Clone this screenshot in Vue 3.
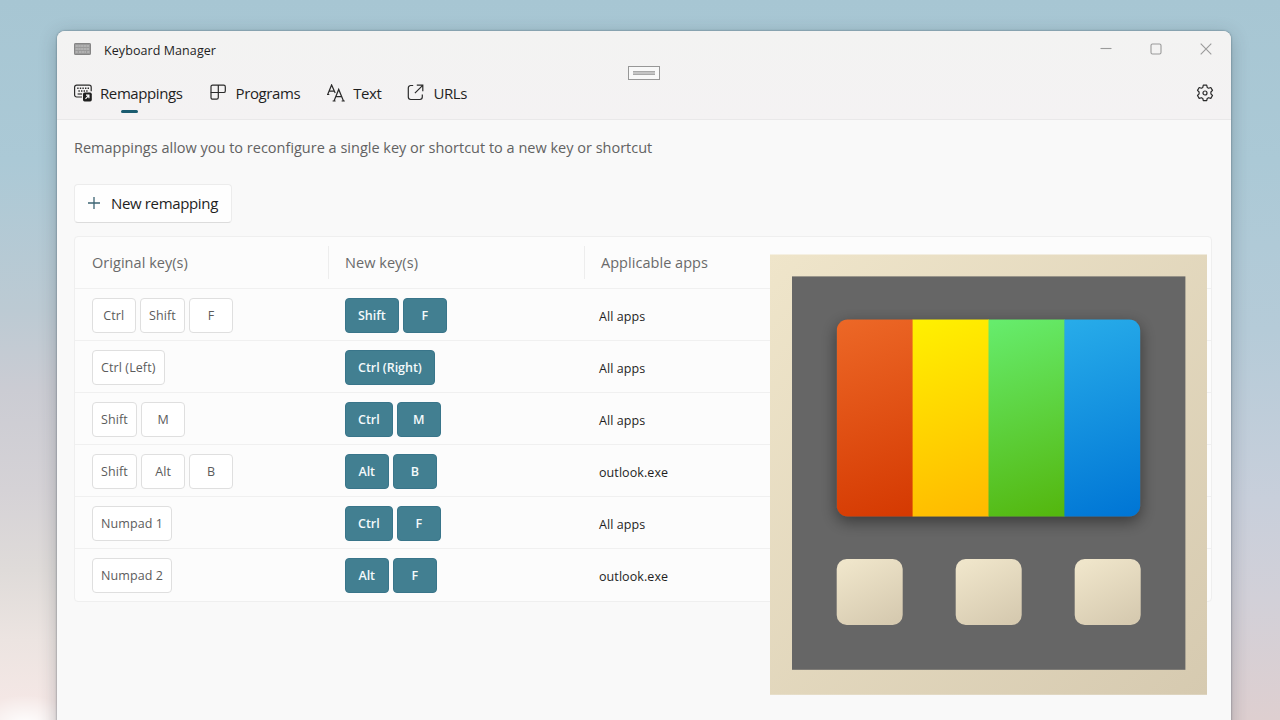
<template>
  <div class="desktop">
    <div class="window">
      <!-- Title bar and tabs -->
      <header class="window-head">
        <div class="title-bar">
          <svg class="app-icon" viewBox="0 0 17 12">
            <rect x="0.5" y="0.5" width="16" height="11" rx="0.6" fill="#9a9a9a" stroke="#858585" />
            <path d="M1.5 3h14M1.5 6h14M1.5 9h2.2M5 9h7M13.2 9h2.3" stroke="#cfcfcf" stroke-width="0.9" stroke-dasharray="2.4 0.4" />
          </svg>
          <span class="app-title">Keyboard Manager</span>
          <div class="window-controls">
            <svg viewBox="0 0 12 12"><path d="M0.5 5.5h11" /></svg>
            <svg viewBox="0 0 12 12"><rect x="1" y="1" width="10" height="10" rx="1.5" /></svg>
            <svg viewBox="0 0 12 12"><path d="M0.7 0.7l10.6 10.6M11.3 0.7L0.7 11.3" /></svg>
          </div>
        </div>
        <nav class="tab-bar">
          <button
            v-for="tab in tabs"
            :key="tab.id"
            class="tab"
            :class="[tab.id, { active: activeTab === tab.id }]"
            @click="activeTab = tab.id"
          >
            <svg v-if="tab.id === 'remappings'" class="tab-icon" viewBox="0 0 18 18">
              <path d="M8 13H2.6a2 2 0 0 1-2-2V3.2a2 2 0 0 1 2-2h12.6a2 2 0 0 1 2 2v4" />
              <path d="M3.2 4.3h12M4.4 7h9.6" stroke-width="1.4" stroke-dasharray="1.4 1.2" />
              <path d="M3.6 10h4.5" />
              <rect x="9" y="8.6" width="8.8" height="8.8" rx="1.6" fill="#1f1f1f" stroke="none" />
              <path d="M11.5 14.8l3.3-3.5M12 11.2h2.9v3" stroke="#fff" />
            </svg>
            <svg v-else-if="tab.id === 'programs'" class="tab-icon" viewBox="0 0 18 18">
              <path d="M2.7 1.1h11a1.6 1.6 0 0 1 1.6 1.6v4.2a1.6 1.6 0 0 1-1.6 1.6H1V2.7a1.6 1.6 0 0 1 1.7-1.6z" />
              <path d="M8.3 1.1v12.5a1.6 1.6 0 0 1-1.6 1.6h-4A1.6 1.6 0 0 1 1 13.600V8.500" />
            </svg>
            <svg v-else-if="tab.id === 'text'" class="tab-icon" viewBox="0 0 18 18">
              <path d="M0.7 10.4L4.6 0.9l3.6 8.2M2 7.1h5M0 10.5h2.3" />
              <path d="M7 16.9L11.7 5.4l4.8 11.5M8.7 12.7h6M5.6 17h3M14.6 17h3.2" />
            </svg>
            <svg v-else class="tab-icon" viewBox="0 0 18 18">
              <path d="M6.2 1.5H3.7a2.4 2.4 0 0 0-2.4 2.4v9.2a2.4 2.4 0 0 0 2.4 2.4h9.200a2.4 2.4 0 0 0 2.400-2.400V10.500" />
              <path d="M9.800 1.200h6v6M15.700 1.300L7.900 9.200" />
            </svg>
            <span>{{ tab.label }}</span>
          </button>
          <svg class="gear" viewBox="0 0 18 18">
            <path d="M7.3 1.2h3.4l.5 2.2 1.4.8 2.2-.7 1.7 2.9-1.6 1.6v1.9l1.6 1.6-1.7 2.9-2.2-.7-1.4.8-.5 2.2H7.3l-.5-2.2-1.4-.8-2.2.7-1.7-2.9 1.6-1.6V8L1.5 6.4l1.7-2.9 2.2.7 1.4-.8z" />
            <circle cx="9" cy="9" r="2" />
          </svg>
        </nav>
      </header>

      <!-- Page content -->
      <main class="content">
        <p class="description">Remappings allow you to reconfigure a single key or shortcut to a new key or shortcut</p>
        <button class="new-btn">
          <svg viewBox="0 0 14 14"><path d="M7 1v12M1 7h12" /></svg>
          <span>New remapping</span>
        </button>

        <div class="table">
          <div class="row table-head">
            <div class="cell">Original key(s)</div>
            <div class="cell">New key(s)</div>
            <div class="cell">Applicable apps</div>
          </div>
          <div v-for="(item, index) in remappings" :key="index" class="row">
            <div class="cell keys">
              <span v-for="key in item.original" :key="key" class="key">{{ key }}</span>
            </div>
            <div class="cell keys">
              <span v-for="key in item.remapped" :key="key" class="key accent">{{ key }}</span>
            </div>
            <div class="cell app-name">{{ item.app }}</div>
          </div>
        </div>
      </main>
    </div>

    <div class="grip"><i></i></div>

    <!-- PowerToys logo over the window -->
    <svg class="logo" viewBox="0 0 437 441">
      <defs>
        <linearGradient id="frame" x1="0" y1="0" x2="1" y2="1">
          <stop offset="0" stop-color="#efe5ca" />
          <stop offset="1" stop-color="#d6cab0" />
        </linearGradient>
        <linearGradient id="pad" x1="0.25" y1="0" x2="0.75" y2="1">
          <stop offset="0" stop-color="#efe5ca" />
          <stop offset="1" stop-color="#d6cab0" />
        </linearGradient>
        <linearGradient
          v-for="(stripe, index) in stripes"
          :id="stripe.id"
          :key="stripe.id"
          gradientUnits="userSpaceOnUse"
          :x1="72 + index * 75.9"
          y1="68"
          :x2="138 + index * 75.9"
          y2="259"
        >
          <stop offset="0" :stop-color="stripe.from" />
          <stop offset="1" :stop-color="stripe.to" />
        </linearGradient>
        <clipPath id="screen"><rect x="66.7" y="65.5" width="303.5" height="197" rx="11" /></clipPath>
        <filter id="shadow" x="-20%" y="-20%" width="140%" height="150%">
          <feDropShadow dx="0" dy="5" stdDeviation="8" flood-color="#000" flood-opacity="0.45" />
        </filter>
      </defs>
      <rect y="0.5" width="437" height="440.3" fill="url(#frame)" />
      <rect x="22" y="22.4" width="393.4" height="393.4" fill="#666" />
      <rect x="66.7" y="65.5" width="303.5" height="197" rx="11" fill="#555" filter="url(#shadow)" />
      <g clip-path="url(#screen)">
        <rect
          v-for="(stripe, index) in stripes"
          :key="stripe.id"
          :x="66.7 + index * 75.9"
          y="65"
          width="76.4"
          height="198"
          :fill="`url(#${stripe.id})`"
        />
      </g>
      <rect v-for="x in [66.7, 185.7, 304.7]" :key="x" :x="x" y="305" width="66" height="66" rx="10" fill="url(#pad)" />
    </svg>
  </div>
</template>

<script setup>
import { ref } from 'vue';

const activeTab = ref('remappings');

const tabs = [
  { id: 'remappings', label: 'Remappings' },
  { id: 'programs', label: 'Programs' },
  { id: 'text', label: 'Text' },
  { id: 'urls', label: 'URLs' },
];

const remappings = ref([
  { original: ['Ctrl', 'Shift', 'F'], remapped: ['Shift', 'F'], app: 'All apps' },
  { original: ['Ctrl (Left)'], remapped: ['Ctrl (Right)'], app: 'All apps' },
  { original: ['Shift', 'M'], remapped: ['Ctrl', 'M'], app: 'All apps' },
  { original: ['Shift', 'Alt', 'B'], remapped: ['Alt', 'B'], app: 'outlook.exe' },
  { original: ['Numpad 1'], remapped: ['Ctrl', 'F'], app: 'All apps' },
  { original: ['Numpad 2'], remapped: ['Alt', 'F'], app: 'outlook.exe' },
]);

const stripes = [
  { id: 'orange', from: '#ec6726', to: '#d53a02' },
  { id: 'yellow', from: '#fff000', to: '#ffba00' },
  { id: 'green', from: '#66ec6c', to: '#54b70f' },
  { id: 'blue', from: '#27abe9', to: '#0076d5' },
];
</script>

<style>
body {
  overflow: hidden;
}
</style>

<style scoped>
.desktop {
  position: relative;
  box-sizing: border-box;
  height: 720px;
  padding: 31px 49px 0 57px;
  overflow: hidden;
  /* left edge turns warm earlier than the right one */
  background:
    radial-gradient(ellipse 50px 30px at 25px 725px, #fff, rgba(255, 255, 255, 0)),
    linear-gradient(#a7c6d3 0, #abc9d6 160px, #bccad3 310px, #cbccd3 390px, #d5d2d6 490px, #dfdbd9 570px, #ece4e1 640px, #f4e7e5 700px) 0 0 / 100px 100% no-repeat,
    linear-gradient(#a7c6d3 0, #abc9d6 160px, #b5cbd8 330px, #c8cfdb 500px, #d2d0d8 600px, #decfd0 720px);
  font-family: 'Open Sans', 'Noto Sans', sans-serif;
  color: #1f1f1f;
}

button {
  border: none;
  background: none;
  padding: 0;
  font: inherit;
  color: inherit;
}

svg {
  display: block;
  flex: none;
}

.window {
  height: 720px;
  border-radius: 8px 8px 0 0;
  background: #f9f9f9;
  box-shadow: 0 0 2px rgba(30, 50, 60, 0.6), 0 4px 18px rgba(40, 50, 60, 0.28);
}

/* Title bar */
.window-head {
  box-sizing: border-box;
  height: 89px;
  border-bottom: 1px solid #e9e8e9;
  border-radius: 8px 8px 0 0;
  background: linear-gradient(#f3f3f2, #f4f2f3);
}

.title-bar {
  display: flex;
  align-items: center;
  height: 36px;
  padding: 0 19px 0 17px;
}

.app-icon {
  width: 17px;
  height: 12px;
}

.app-title {
  margin-left: 13px;
  padding-top: 2px;
  font-size: 12.5px;
  letter-spacing: 0.08px;
}

.window-controls {
  display: flex;
  gap: 38px;
  margin-left: auto;
}

.window-controls svg {
  width: 12px;
  height: 12px;
  fill: none;
  stroke: #9a9a9a;
  stroke-width: 1.1;
}

/* Tabs */
.tab-bar {
  display: flex;
  align-items: center;
  height: 51px;
  padding: 0 17px;
}

.tab {
  position: relative;
  display: flex;
  align-items: center;
  gap: 8px;
  height: 51px;
  margin-right: 27px;
  font-size: 15px;
  letter-spacing: -0.4px;
}

.tab.text {
  margin-right: 26px;
}

.tab.active::after {
  content: '';
  position: absolute;
  bottom: 5px;
  left: 47px;
  width: 17px;
  height: 3px;
  border-radius: 2px;
  background: #1b5c70;
}

.tab-icon,
.gear {
  width: 18px;
  height: 18px;
  fill: none;
  stroke: #2b2b2b;
  stroke-width: 1.2;
}

.gear {
  margin-left: auto;
  stroke-linejoin: round;
}

/* Content */
.content {
  padding: 17px 19px 0 17px;
}

.description {
  margin: 0;
  line-height: 21px;
  font-size: 14.5px;
  color: #626262;
}

.new-btn {
  display: flex;
  align-items: center;
  box-sizing: border-box;
  width: 158px;
  height: 39px;
  margin-top: 26px;
  padding: 0 0 2px 12px;
  gap: 10px;
  border: 1px solid #ececec;
  border-bottom-color: #dcdcdc;
  border-radius: 4px;
  background: #fefefe;
  font-size: 15px;
  letter-spacing: -0.35px;
}

.new-btn svg {
  width: 14px;
  height: 14px;
  stroke: #3d6473;
  stroke-width: 1.3;
}

/* Table */
.table {
  margin-top: 13px;
  border: 1px solid #efefef;
  border-radius: 4px;
  background: #fcfcfc;
}

.row {
  display: grid;
  grid-template-columns: 253px 256px 1fr;
  align-items: center;
  box-sizing: border-box;
  height: 52px;
  padding-top: 2px;
  border-bottom: 1px solid #f0f0f0;
}

.row:last-child {
  border-bottom-color: transparent;
}

.table-head {
  padding-top: 0;
}

.cell {
  padding-left: 17px;
}

.table-head .cell {
  height: 33px;
  line-height: 33px;
  font-size: 14.5px;
  letter-spacing: 0.04px;
  color: #6a6a6a;
}

.table-head .cell + .cell {
  border-left: 1px solid #ededed;
}

.table-head .cell:nth-child(2) {
  padding-left: 16px;
}

.table-head .cell:nth-child(3) {
  padding-left: 16px;
}

.keys {
  display: flex;
  gap: 4.5px;
}

.key {
  box-sizing: border-box;
  min-width: 43.5px;
  height: 35px;
  padding: 0 8px;
  border: 1px solid #dfdfdf;
  border-radius: 4px;
  background: #fff;
  line-height: 33px;
  text-align: center;
  font-size: 12.5px;
  letter-spacing: 0.1px;
  color: #5c5c5c;
}

.key.accent {
  padding: 0 12px;
  border-color: #39758a;
  background: #427f91;
  font-weight: 600;
  letter-spacing: -0.04px;
  color: #f4fafb;
}

.app-name {
  padding: 2px 0 0 15px;
  font-size: 12.5px;
  font-weight: 500;
  letter-spacing: 0.08px;
}

/* Drag handle overlapping title bar and tabs */
.grip {
  position: absolute;
  top: 66px;
  left: 628px;
  box-sizing: border-box;
  width: 32px;
  height: 14px;
  padding: 4px;
  border: 1px solid #979797;
  background: #f8f8f8;
}

.grip i {
  display: block;
  height: 2px;
  border-top: 1px solid #a8a8a8;
  border-bottom: 1px solid #a8a8a8;
  background: #c4c4c4;
}

.logo {
  position: absolute;
  top: 254px;
  left: 770px;
  width: 437px;
  height: 441px;
}
</style>
